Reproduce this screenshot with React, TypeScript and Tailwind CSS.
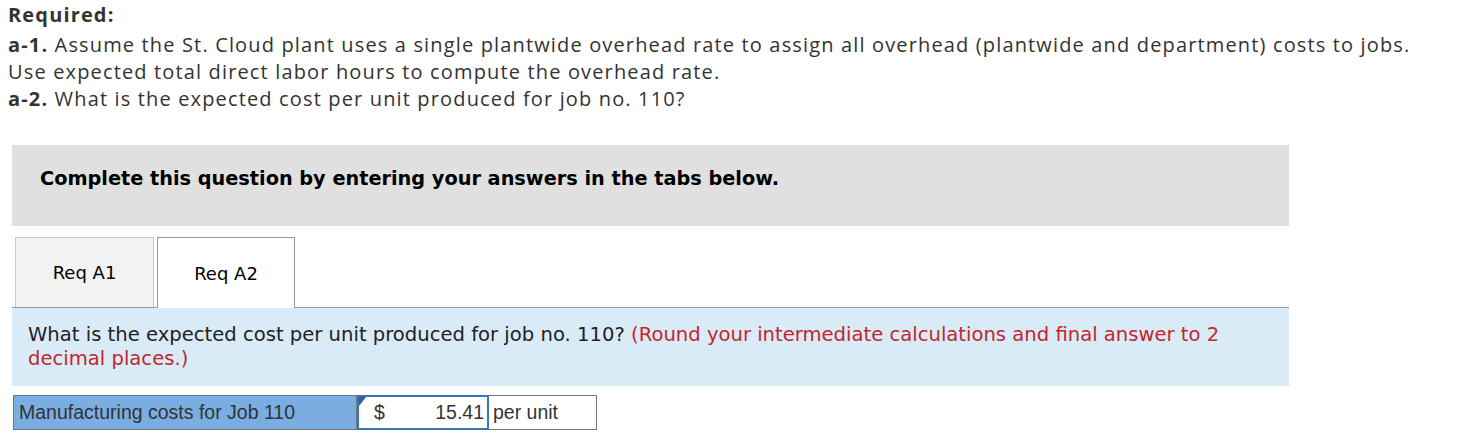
import { useState } from "react";

const tabs = ["Req A1", "Req A2"];

export default function App() {
  const [active, setActive] = useState(1);

  return (
    <div className="bg-white min-h-screen w-[1468px] h-[433px] overflow-hidden">
      <div className="px-2 pt-[1px] text-[#333] font-['Open_Sans','Lato',sans-serif] text-[20px] leading-[27px] tracking-[1.15px]">
        <p className="font-bold">Required:</p>
        <p className="mt-[3px]">
          <b>a-1.</b> Assume the St. Cloud plant uses a single plantwide overhead rate to assign all overhead (plantwide
          and department) costs to jobs.
          <br />
          Use expected total direct labor hours to compute the overhead rate.
        </p>
        <p>
          <b>a-2.</b> What is the expected cost per unit produced for job no. 110?
        </p>
      </div>

      <div className="ml-3 w-[1277px] mt-[33px] font-['DejaVu_Sans','Verdana',sans-serif]">
        <div className="h-[81px] bg-[#e0e0e0] flex items-center pb-3 px-7">
          <p className="text-[19.3px] font-bold text-black">
            Complete this question by entering your answers in the tabs below.
          </p>
        </div>

        <div className="mt-[11px] flex items-end gap-[3px] pl-[3px] border-b border-[#999]">
          {tabs.map((t, i) => (
            <button
              key={t}
              onClick={() => setActive(i)}
              className={
                i === active
                  ? "w-[138px] h-[71px] -mb-px bg-white border border-b-0 border-[#999] text-[18px] text-black"
                  : "w-[139px] h-[70px] bg-[#f2f2f2] border border-b-0 border-[#c8c8c8] text-[18px] text-black"
              }
            >
              {t}
            </button>
          ))}
        </div>

        <div className="bg-[#daebf8] pl-4 pr-16 pt-[15px] pb-[15px] text-[19.6px] leading-[24px] text-[#222]">
          What is the expected cost per unit produced for job no. 110?{" "}
          <span className="text-[#c1272d]">
            (Round your intermediate calculations and final answer to 2 decimal places.)
          </span>
        </div>
      </div>

      <div className="ml-[13px] mt-[9px] flex h-[35px] font-['Liberation_Sans',Arial,sans-serif] text-[19.5px] text-[#333]">
        <div className="w-[344px] bg-[#7aaee3] border border-[#777] flex items-center pl-[5px]">
          Manufacturing costs for Job 110
        </div>
        <div className="relative w-[132px] border-2 border-[#3c72b9] bg-white flex items-center pl-[15px] pr-[3px]">
          <span className="absolute left-0 top-0 w-0 h-0 border-t-[9px] border-t-[#2f5fa8] border-r-[7px] border-r-transparent" />
          <span>$</span>
          <span className="flex-1 text-right">15.41</span>
        </div>
        <div className="w-[108px] border border-l-0 border-[#777] bg-white flex items-center pl-[4px]">per unit</div>
      </div>
    </div>
  );
}
